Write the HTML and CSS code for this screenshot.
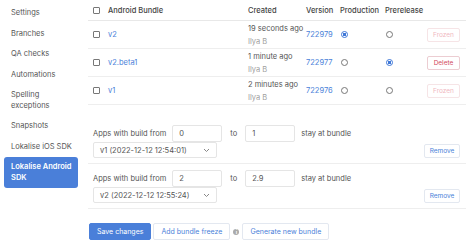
FILE: index.html
```html
<!DOCTYPE html>
<html lang="en">

<head>
    <meta charset="UTF-8">
    <title>Lokalise Android SDK</title>
    <link rel="stylesheet" href="styles.css">
</head>

<body>
    <div class="layout">
        <nav class="sidebar">
            <a class="nav-item">Settings</a>
            <a class="nav-item">Branches</a>
            <a class="nav-item">QA checks</a>
            <a class="nav-item">Automations</a>
            <a class="nav-item">Spelling exceptions</a>
            <a class="nav-item">Snapshots</a>
            <a class="nav-item">Lokalise iOS SDK</a>
            <a class="nav-item active">Lokalise Android SDK</a>
        </nav>

        <main class="content">
            <table class="bundles">
                <thead>
                    <tr>
                        <th class="col-check"><span class="checkbox"></span></th>
                        <th class="col-name">Android Bundle</th>
                        <th class="col-created">Created</th>
                        <th class="col-version">Version</th>
                        <th class="col-prod">Production</th>
                        <th class="col-pre">Prerelease</th>
                        <th class="col-action"></th>
                    </tr>
                </thead>
                <tbody>
                    <tr>
                        <td><span class="checkbox"></span></td>
                        <td><a class="link">v2</a></td>
                        <td>19 seconds ago<div class="author">Ilya B</div></td>
                        <td><a class="link">722979</a></td>
                        <td><span class="radio checked"></span></td>
                        <td><span class="radio"></span></td>
                        <td><button class="btn-small frozen">Frozen</button></td>
                    </tr>
                    <tr>
                        <td><span class="checkbox"></span></td>
                        <td><a class="link">v2.beta1</a></td>
                        <td>1 minute ago<div class="author">Ilya B</div></td>
                        <td><a class="link">722977</a></td>
                        <td><span class="radio"></span></td>
                        <td><span class="radio checked"></span></td>
                        <td><button class="btn-small delete">Delete</button></td>
                    </tr>
                    <tr>
                        <td><span class="checkbox"></span></td>
                        <td><a class="link">v1</a></td>
                        <td>2 minutes ago<div class="author">Ilya B</div></td>
                        <td><a class="link">722976</a></td>
                        <td><span class="radio"></span></td>
                        <td><span class="radio"></span></td>
                        <td><button class="btn-small frozen">Frozen</button></td>
                    </tr>
                </tbody>
            </table>

            <div class="rule first">
                <div class="rule-line">
                    <span>Apps with build from</span>
                    <input class="field" type="text" value="0">
                    <span class="to">to</span>
                    <input class="field" type="text" value="1">
                    <span class="stay">stay at bundle</span>
                </div>
                <div class="rule-bottom">
                    <div class="select">
                        v1 (2022-12-12 12:54:01)
                        <svg width="7" height="5" viewBox="0 0 7 5"><path d="M1 1l2.5 2.5L6 1" fill="none" stroke="#888" stroke-width="1"/></svg>
                    </div>
                    <button class="btn-small remove">Remove</button>
                </div>
            </div>

            <div class="rule">
                <div class="rule-line">
                    <span>Apps with build from</span>
                    <input class="field" type="text" value="2">
                    <span class="to">to</span>
                    <input class="field" type="text" value="2.9">
                    <span class="stay">stay at bundle</span>
                </div>
                <div class="rule-bottom">
                    <div class="select">
                        v2 (2022-12-12 12:55:24)
                        <svg width="7" height="5" viewBox="0 0 7 5"><path d="M1 1l2.5 2.5L6 1" fill="none" stroke="#888" stroke-width="1"/></svg>
                    </div>
                    <button class="btn-small remove">Remove</button>
                </div>
            </div>

            <div class="actions">
                <button class="btn primary">Save changes</button>
                <button class="btn">Add bundle freeze</button>
                <span class="info">i</span>
                <button class="btn">Generate new bundle</button>
            </div>
        </main>
    </div>
</body>

</html>
```

FILE: styles.css
```css
body {
    margin: 0;
    font-family: Inter, "Open Sans", sans-serif;
    font-size: 7.5px;
    color: #555;
    background: #fff;
}

.layout {
    display: flex;
    width: 474px;
}

/* sidebar */
.sidebar {
    width: 74px;
    padding: 3px 0 0 4px;
    display: flex;
    flex-direction: column;
}

.nav-item {
    display: block;
    padding: 5px 3px 5px 7px;
    line-height: 10.5px;
    color: #555;
    border-radius: 3px;
}

.nav-item.active {
    background-color: #4a7fd9;
    color: #fff;
    font-weight: 600;
}

/* main */
.content {
    flex: 1;
    padding: 0 8px 0 10px;
}

.bundles {
    width: 100%;
    border-collapse: collapse;
    table-layout: fixed;
}

.bundles th {
    height: 20px;
    text-align: left;
    font-weight: 500;
    color: #444;
    border-bottom: 1px solid #e8e8e8;
    padding: 0;
}

.bundles td {
    height: 27px;
    padding: 0;
    border-bottom: 1px solid #eee;
    vertical-align: middle;
}

.col-check { width: 15px; }
.col-name { width: 140px; }
.col-created { width: 58px; }
.col-version { width: 34px; }
.col-prod { width: 45px; }
.col-pre { width: 40px; }

.bundles th:first-child,
.bundles td:first-child {
    padding-left: 5px;
}

.checkbox {
    display: block;
    width: 5px;
    height: 5px;
    border: 1px solid #777;
    border-radius: 1px;
}

.link {
    color: #4a7fd9;
}

.author {
    color: #a0a0a0;
    margin-top: 4px;
}

.radio {
    display: block;
    width: 5px;
    height: 5px;
    border: 1px solid #777;
    border-radius: 50%;
    margin-left: 1px;
}

.radio.checked {
    border-color: #3f78d8;
    background: radial-gradient(circle, #3f78d8 0 1.6px, #fff 2px);
}

.btn-small {
    display: block;
    margin-left: auto;
    margin-right: 6px;
    width: 33px;
    height: 14px;
    padding: 0;
    font-family: inherit;
    font-size: 6.5px;
    background: #fff;
    border: 1px solid #eee;
    border-radius: 2px;
}

.btn-small.frozen {
    color: #f0b8bf;
    border-color: #f6e4e6;
}

.btn-small.delete {
    color: #d24a5e;
    border-color: #eccdd2;
}

.btn-small.remove {
    width: 36px;
    color: #4a7fd9;
    border-color: #e3e8f0;
}

/* rules */
.rule {
    padding: 6px 0 5px 5px;
    border-bottom: 1px solid #eee;
}

.rule.first {
    padding-top: 20px;
}

.rule-line {
    display: flex;
    align-items: center;
}

.field {
    width: 50px;
    height: 17px;
    box-sizing: border-box;
    margin-left: 6px;
    padding: 0 6px;
    font-family: inherit;
    font-size: 7.5px;
    color: #555;
    border: 1px solid #e5e5e5;
    border-radius: 2px;
}

.to {
    margin: 0 2px 0 8px;
}

.stay {
    margin-left: 6px;
}

.rule-bottom {
    display: flex;
    align-items: flex-end;
    justify-content: space-between;
}

.select {
    width: 124px;
    height: 16px;
    box-sizing: border-box;
    display: flex;
    align-items: center;
    justify-content: space-between;
    padding: 0 6px;
    border: 1px solid #e5e5e5;
    border-radius: 2px;
}

/* bottom actions */
.actions {
    display: flex;
    align-items: center;
    gap: 2px;
    padding: 14px 0 0 1px;
}

.btn {
    height: 17px;
    padding: 0 7px;
    font-family: inherit;
    font-size: 7px;
    color: #4a7fd9;
    background: #fff;
    border: 1px solid #e3e8f0;
    border-radius: 2px;
}

.btn.primary {
    background-color: #4a7fd9;
    border-color: #4a7fd9;
    color: #fff;
}

.info {
    width: 6px;
    height: 6px;
    margin: 0 1px;
    border-radius: 50%;
    background: #aaa;
    color: #fff;
    font-size: 5px;
    line-height: 6px;
    text-align: center;
    font-weight: 700;
}
```
